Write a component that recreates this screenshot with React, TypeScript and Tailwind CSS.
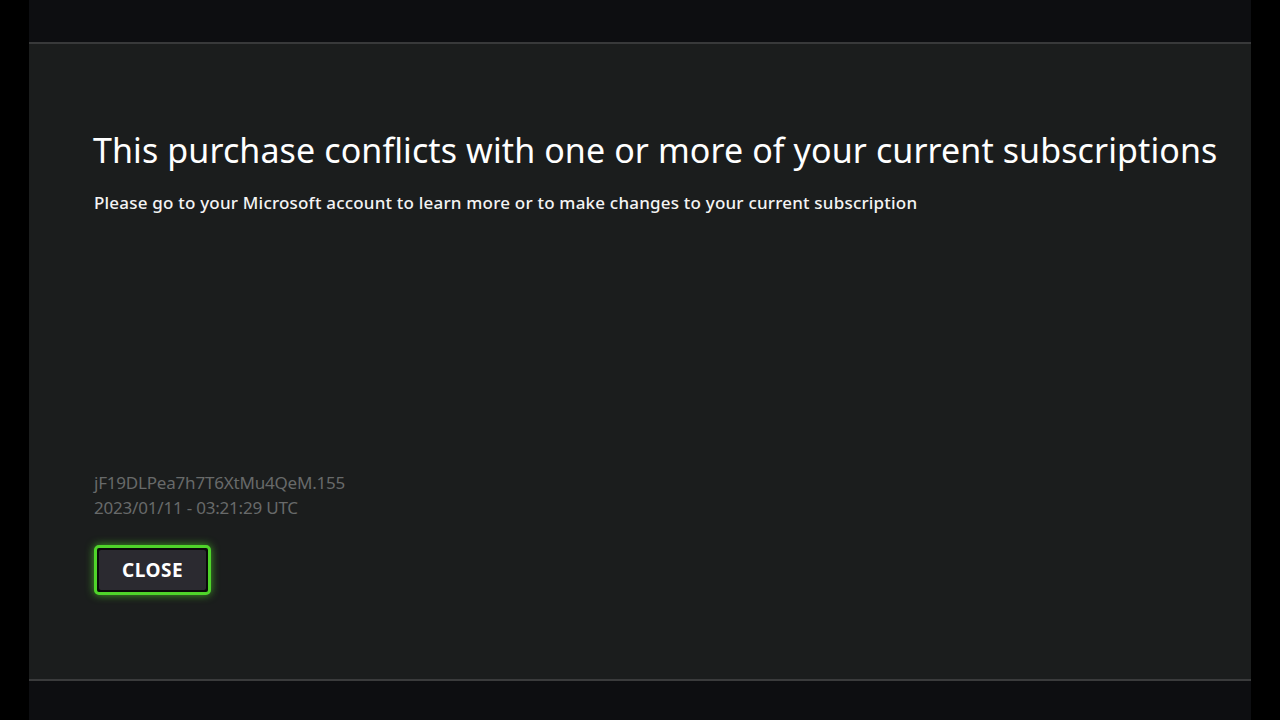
export default function App() {
  return (
    <div className="w-[1280px] h-[720px] bg-black flex overflow-hidden" style={{ fontFamily: '"Noto Sans", "DejaVu Sans", sans-serif' }}>
      <div className="w-[29px] shrink-0" />
      <div className="w-[1222px] flex flex-col">
        <div className="h-[42px] bg-[#0d0e11] shrink-0" />
        <div className="h-[2px] bg-[#38393a] shrink-0" />
        <div className="flex-1 bg-[#1b1d1d] pl-[64px] pt-[84px] flex flex-col">
          <h1 className="text-[34px] leading-[44px] text-white tracking-[0.1px]">
            This purchase conflicts with one or more of your current subscriptions
          </h1>
          <p className="ml-[1px] mt-[19px] text-[17px] leading-[24px] font-medium text-[#f4f4f4] tracking-[0.2px]">
            Please go to your Microsoft account to learn more or to make changes to your current subscription
          </p>
          <div className="ml-[1px] mt-[255px] text-[17px] leading-[25px] text-[#686a6a] tracking-[-0.2px]">
            <div>jF19DLPea7h7T6XtMu4QeM.155</div>
            <div>2023/01/11 - 03:21:29 UTC</div>
          </div>
          <div className="ml-[1px] mt-[25px] w-[117px] h-[50px] rounded-[5px] border-[3px] border-[#4fd42a] bg-[#0a0a0a] p-[2px] shadow-[0_0_8px_rgba(80,215,40,0.7)]">
            <div className="w-full h-full rounded-[2px] bg-[#2b2a30] flex items-center justify-center text-[19px] font-bold text-white tracking-[0.5px]">
              CLOSE
            </div>
          </div>
        </div>
        <div className="h-[2px] bg-[#3a3b3c] shrink-0" />
        <div className="h-[39px] bg-[#0d0e11] shrink-0" />
      </div>
    </div>
  )
}
